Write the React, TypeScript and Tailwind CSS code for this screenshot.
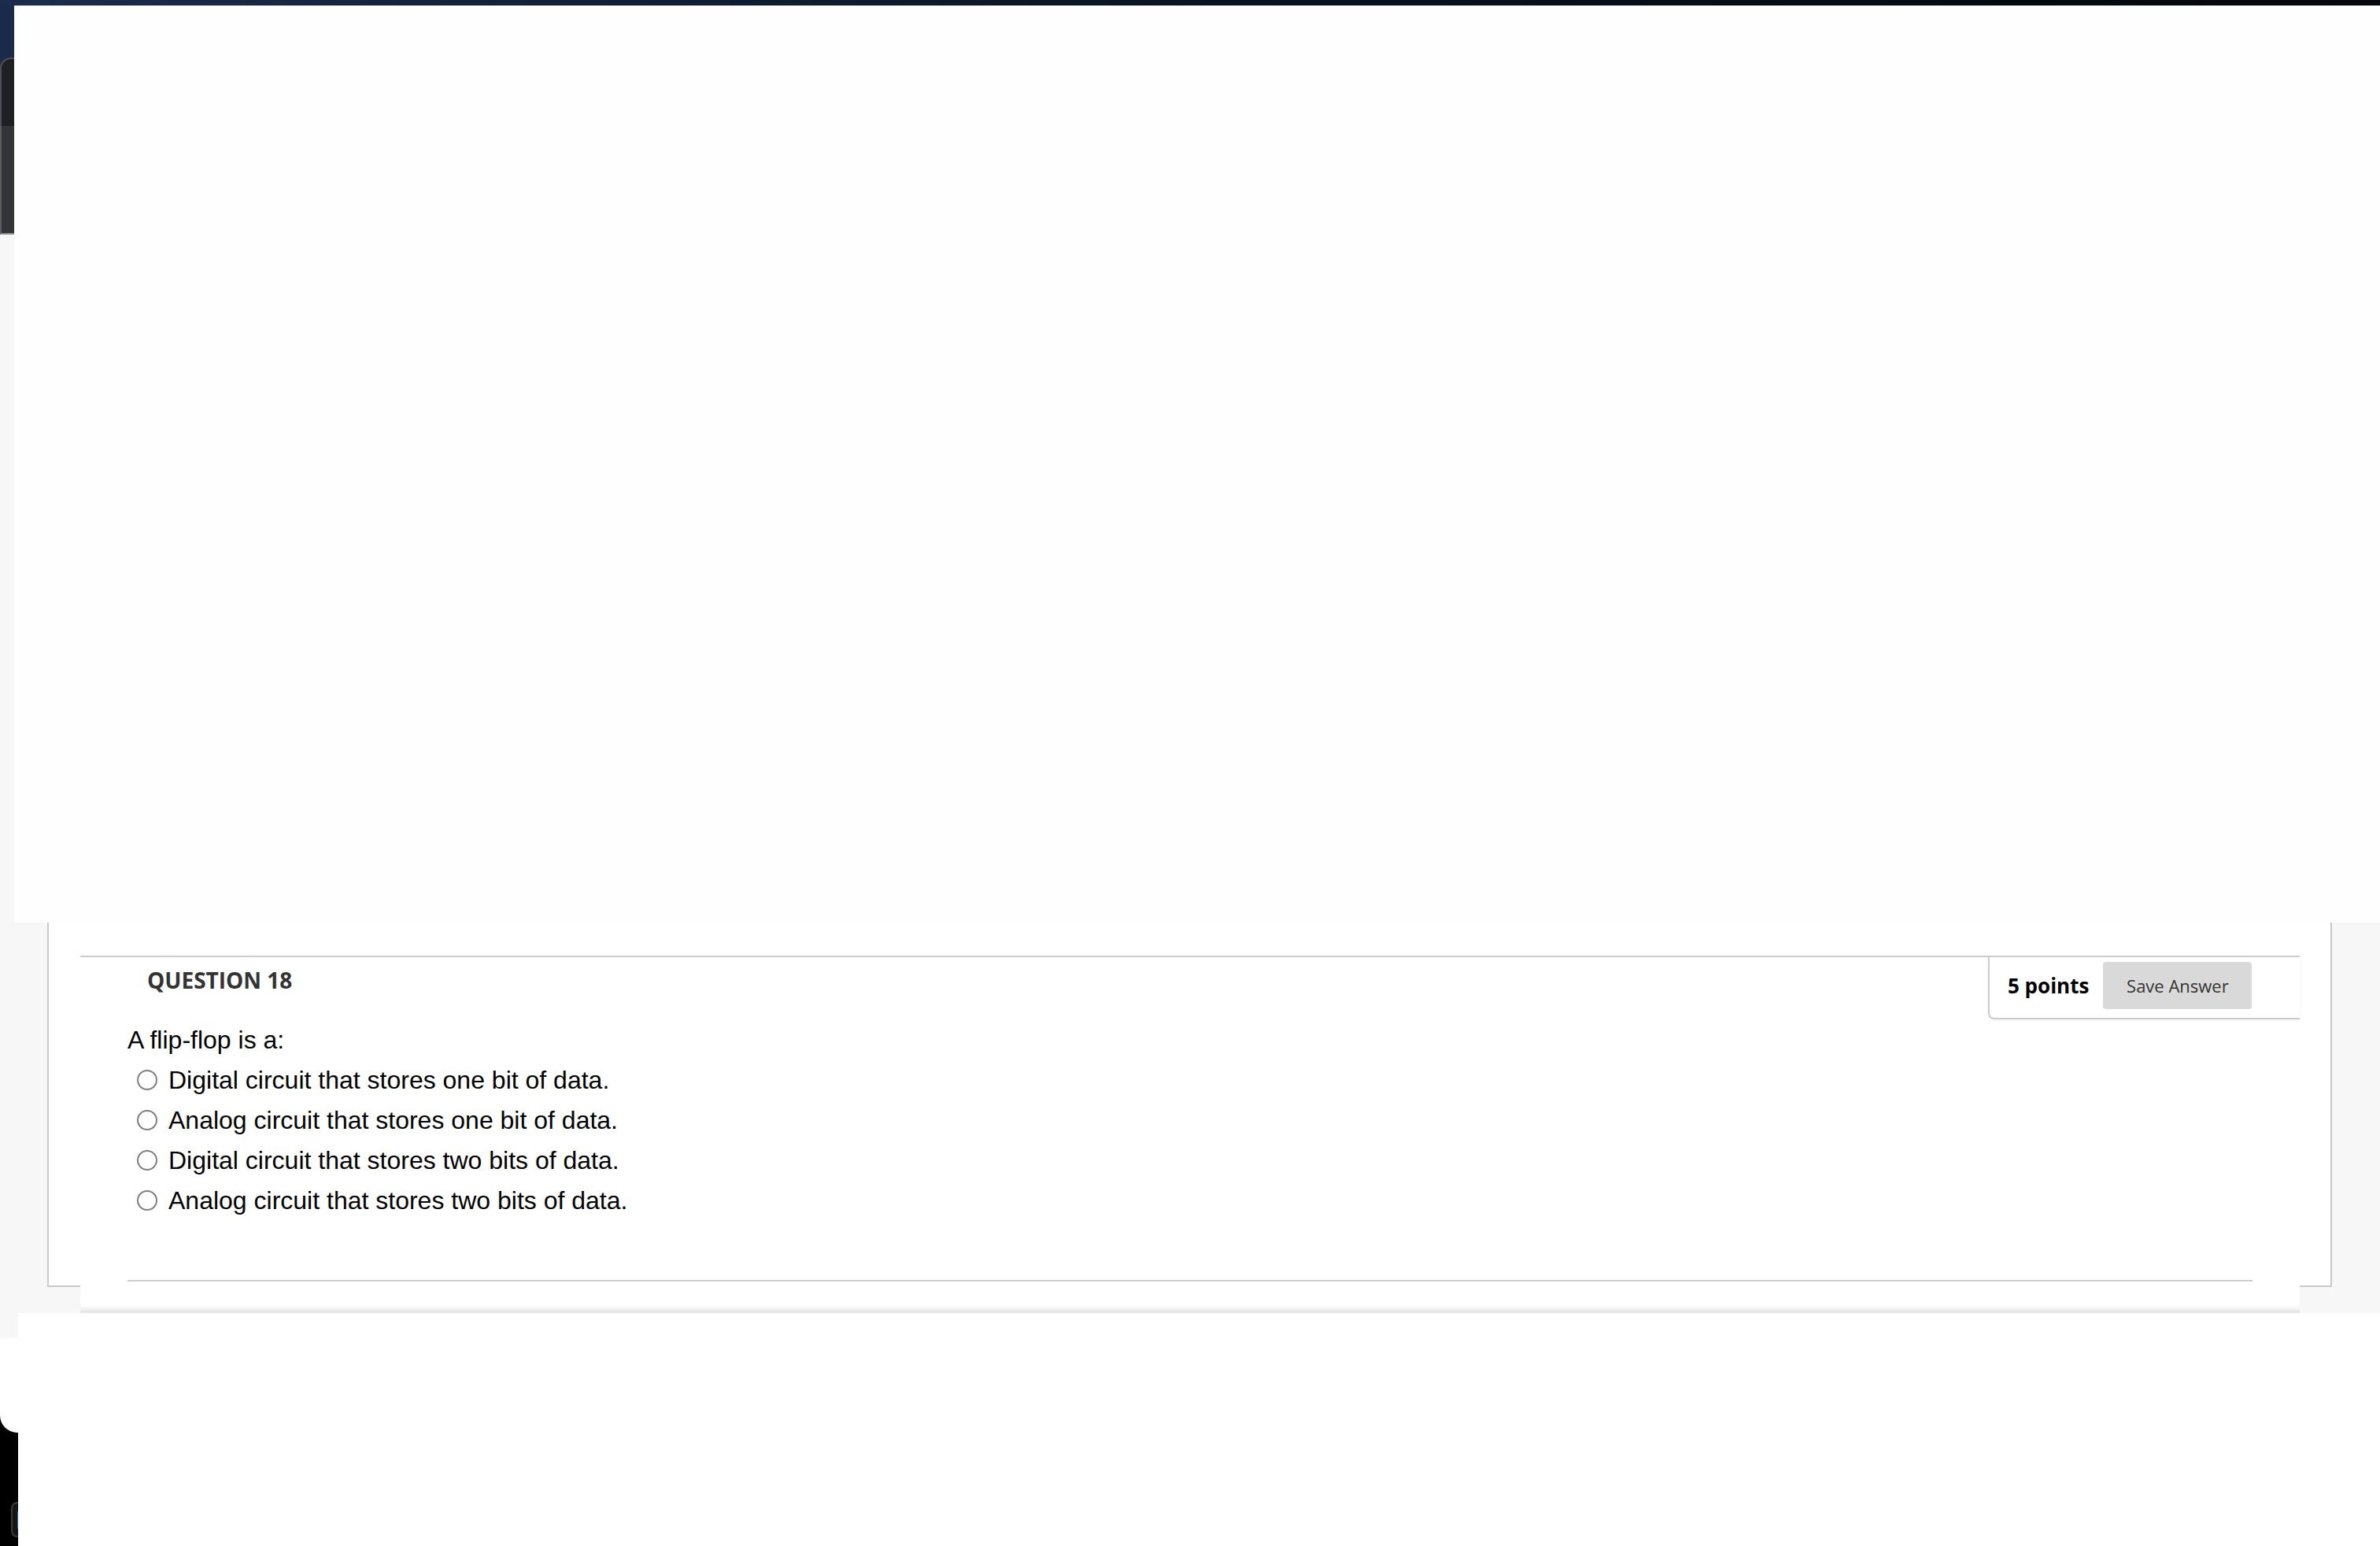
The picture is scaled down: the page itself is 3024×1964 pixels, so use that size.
const options = [
  'Digital circuit that stores one bit of data.',
  'Analog circuit that stores one bit of data.',
  'Digital circuit that stores two bits of data.',
  'Analog circuit that stores two bits of data.',
]

function Radio() {
  return (
    <span className="w-[26px] h-[26px] shrink-0 rounded-full border-2 border-[#7f7f7f] bg-white" />
  )
}

export default function App() {
  return (
    <div className="w-[3024px] h-[1964px] overflow-hidden flex flex-col bg-black">
      {/* top strip */}
      <div className="h-[7px] bg-linear-to-r from-[#1b2c4d] via-[#0a1322] to-[#04070b]" />

      {/* upper window row */}
      <div className="flex h-[1165px]">
        <div className="w-[18px] flex flex-col bg-[#f7f7f7]">
          <div className="h-[66px] bg-[#192a4a]" />
          <div className="bg-[#192a4a]">
            <div className="h-[87px] bg-[#1f2024] rounded-tl-[14px] border-t-2 border-l-2 border-[#4d5058]" />
          </div>
          <div className="h-[138px] bg-[#333438] border-l-2 border-[#5c5d61] border-b-2 border-b-[#8a8b8f]" />
        </div>
        <div className="flex-1 bg-[#fefefe]" />
      </div>

      {/* question area */}
      <div className="h-[496px] bg-[#f7f7f7] flex">
        <div className="ml-[60px] w-[2903px] h-[463px] border-x-2 border-b-2 border-[#c8c8c8] bg-white">
          <div className="ml-[40px] w-[2820px] h-[496px] bg-white flex flex-col relative">
            <div className="h-[42px]" />
            <div className="border-t-2 border-[#cccccc] flex justify-between">
              <div className="pl-[85px] pt-[15px] font-['Open_Sans',sans-serif] font-bold text-[28px] leading-[28px] text-[#333333]">
                QUESTION 18
              </div>
              <div className="w-[396px] h-[79px] border-l-2 border-b-2 border-[#cccccc] rounded-bl-[8px] shadow-[0_1px_3px_rgba(0,0,0,0.06)] flex items-start pt-[6px] pl-[23px] gap-[18px] font-['Open_Sans',sans-serif]">
                <span className="h-[60px] flex items-center font-bold text-[26px] text-black">5 points</span>
                <button className="w-[189px] h-[60px] rounded-[4px] bg-[#d9d9d9] text-[22px] text-[#333333]">
                  Save Answer
                </button>
              </div>
            </div>

            <div className="pl-[60px] flex flex-col font-['Liberation_Sans',Arial,sans-serif] text-[32px] text-black">
              <div className="h-[51px] flex items-center">A flip-flop is a:</div>
              {options.map((o) => (
                <label key={o} className="h-[51px] flex items-center pl-[12px] gap-[14px]">
                  <Radio />
                  <span>{o}</span>
                </label>
              ))}
            </div>

            <div className="mt-auto mb-[40px] mx-[60px] border-t-2 border-[#cccccc]" />
            <div className="absolute bottom-0 inset-x-0 h-[10px] bg-linear-to-b from-transparent to-[#e2e2e2]" />
          </div>
        </div>
      </div>

      {/* bottom window row */}
      <div className="flex flex-1">
        <div className="w-[23px] flex flex-col bg-black overflow-hidden">
          <div className="h-[32px] bg-[#f7f7f7]" />
          <div className="h-[120px] bg-white rounded-bl-[22px]" />
          <div className="flex-1 relative">
            <div className="absolute left-[14px] top-[88px] w-[30px] h-[45px] rounded-[8px] border-2 border-[#3a3a3a] bg-[#151515]">
              <div className="ml-[6px] mt-[10px] w-[20px] h-[22px] bg-[#1e6bd0]" />
            </div>
          </div>
        </div>
        <div className="flex-1 bg-white" />
      </div>
    </div>
  )
}
